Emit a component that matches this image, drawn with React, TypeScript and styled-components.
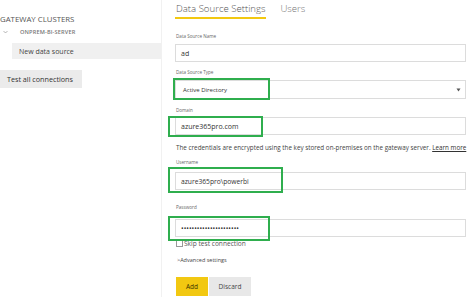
import React from 'react'
import styled, { createGlobalStyle } from 'styled-components'

const GlobalStyle = createGlobalStyle`
  html, body {
    margin: 0;
    padding: 0;
    background: #ffffff;
    font-family: "Open Sans", "Noto Sans", sans-serif;
    overflow: hidden;
  }
`

const Page = styled.div`
  width: 474px;
  height: 297px;
  display: flex;
  overflow: hidden;
  background: #fff;
`

// left column with the gateway tree
const Sidebar = styled.div`
  width: 162px;
  flex-shrink: 0;
  border-right: 1px solid #f1f1f1;
  padding-top: 14px;
  box-sizing: border-box;
`

const ClusterTitle = styled.div`
  font-size: 7.8px;
  color: #555;
  line-height: 11px;
`

const ServerRow = styled.div`
  display: flex;
  align-items: center;
  height: 12px;
  margin-top: 1px;
  padding-left: 3px;
  color: #777;
`

const Chevron = styled.svg`
  width: 5px;
  height: 4px;
  margin-right: 12px;
`

const ServerName = styled.span`
  font-size: 5.6px;
  font-weight: 600;
  letter-spacing: 0.15px;
`

const SourceItem = styled.div`
  margin: 5px 0 0 12px;
  height: 16px;
  background: #f0f0f0;
  display: flex;
  align-items: center;
  padding-left: 7px;
  font-size: 7px;
  color: #444;
`

const SideButton = styled.button`
  margin-top: 11px;
  height: 18px;
  width: 82px;
  border: 0;
  background: #ebebeb;
  font-family: inherit;
  font-size: 7.2px;
  color: #333;
  padding: 0 0 0 7px;
  text-align: left;
  cursor: pointer;
`

const Main = styled.div`
  flex: 1;
  padding-left: 13px;
  position: relative;
`

const Tabs = styled.div`
  display: flex;
  gap: 13px;
  height: 20px;
`

const Tab = styled.div<{ $active?: boolean }>`
  padding: 1px 1px 0;
  font-size: 9.6px;
  font-weight: 300;
  color: ${(p) => (p.$active ? '#555' : '#777')};
  line-height: 16px;
  border-bottom: 2px solid ${(p) => (p.$active ? '#f2c811' : 'transparent')};
  height: 16px;
`

const Field = styled.div<{ $top: number }>`
  margin-top: ${(p) => p.$top}px;
  position: relative;
`

const Label = styled.div`
  font-size: 4.6px;
  color: #666;
  line-height: 8px;
  padding-left: 1px;
`

const Input = styled.div<{ $gap?: number; $h?: number; $size?: number; $pad?: number }>`
  margin-top: ${(p) => p.$gap ?? 4}px;
  width: 291px;
  height: ${(p) => p.$h ?? 18}px;
  box-sizing: border-box;
  border: 1.5px solid #dcdcdc;
  display: flex;
  align-items: center;
  padding-left: ${(p) => p.$pad ?? 5}px;
  font-size: ${(p) => p.$size ?? 7}px;
  color: #333;
  position: relative;
`

const SelectArrow = styled.svg`
  position: absolute;
  right: 4px;
  top: 7px;
  width: 5px;
  height: 4px;
`

// green annotation boxes drawn over the screenshot
const Highlight = styled.div<{ $x: number; $y: number; $w: number; $h: number }>`
  position: absolute;
  left: ${(p) => p.$x}px;
  top: ${(p) => p.$y}px;
  width: ${(p) => p.$w}px;
  height: ${(p) => p.$h}px;
  box-sizing: border-box;
  border: 2px solid #2fae4e;
  pointer-events: none;
`

const Note = styled.div`
  margin-top: 8px;
  font-size: 6.3px;
  color: #444;
  white-space: nowrap;
  padding-left: 1px;
  line-height: 9px;

  a {
    color: #333;
    text-decoration: underline;
  }
`

const CheckRow = styled.div`
  margin-top: 1px;
  display: flex;
  align-items: center;
  gap: 1px;
  font-size: 6.6px;
  color: #555;
  height: 10px;
  padding-left: 1px;
`

const Box = styled.span`
  width: 5px;
  height: 5px;
  border: 1px solid #999;
  display: inline-block;
`

const Advanced = styled.div`
  margin-top: 7px;
  font-size: 5.5px;
  color: #444;
  padding-left: 2px;
  line-height: 10px;
`

const Buttons = styled.div`
  margin-top: 12px;
  display: flex;
  gap: 1px;
  padding-left: 1px;
`

const Btn = styled.button<{ $primary?: boolean }>`
  height: 19px;
  width: ${(p) => (p.$primary ? 32 : 42)}px;
  border: 0;
  padding: 0;
  font-family: inherit;
  font-size: 6.5px;
  color: ${(p) => (p.$primary ? '#3a3000' : '#444')};
  background: ${(p) => (p.$primary ? '#f2c811' : '#e8e8e8')};
`

export default function App() {
  return (
    <>
      <GlobalStyle />
      <Page>
        <Sidebar>
          <ClusterTitle>GATEWAY CLUSTERS</ClusterTitle>
          <ServerRow>
            <Chevron viewBox="0 0 10 6">
              <path d="M1 1 L5 5 L9 1" stroke="#888" strokeWidth="1.2" fill="none" />
            </Chevron>
            <ServerName>ONPREM-BI-SERVER</ServerName>
          </ServerRow>
          <SourceItem>New data source</SourceItem>
          <SideButton>Test all connections</SideButton>
        </Sidebar>
        <Main>
          <Tabs>
            <Tab $active>Data Source Settings</Tab>
            <Tab>Users</Tab>
          </Tabs>
          <Field $top={12}>
            <Label>Data Source Name</Label>
            <Input>ad</Input>
          </Field>
          <Field $top={6}>
            <Label>Data Source Type</Label>
            <Input $h={19} $size={6} $pad={7}>
              Active Directory
              <SelectArrow viewBox="0 0 10 8">
                <path d="M1 1 H9 L5 7 Z" fill="#555" />
              </SelectArrow>
            </Input>
            <Highlight $x={-2} $y={10} $w={97} $h={22} />
          </Field>
          <Field $top={7}>
            <Label>Domain</Label>
            <Input $gap={3}>azure365pro.com</Input>
            <Highlight $x={-7} $y={10} $w={95} $h={21} />
          </Field>
          <Note>
            The credentials are encrypted using the key stored on-premises on the gateway server. <a>Learn more</a>
          </Note>
          <Field $top={6}>
            <Label>Username</Label>
            <Input $gap={6} $size={6.7}>azure365pro\powerbi</Input>
            <Highlight $x={-7} $y={9} $w={115} $h={26} />
          </Field>
          <Field $top={13}>
            <Label>Password</Label>
            <Input $gap={8}>••••••••••••••••••••••</Input>
            <Highlight $x={-7} $y={13} $w={102} $h={25} />
          </Field>
          <CheckRow>
            <Box />
            Skip test connection
          </CheckRow>
          <Advanced>&gt;Advanced settings</Advanced>
          <Buttons>
            <Btn $primary>Add</Btn>
            <Btn>Discard</Btn>
          </Buttons>
        </Main>
      </Page>
    </>
  )
}
